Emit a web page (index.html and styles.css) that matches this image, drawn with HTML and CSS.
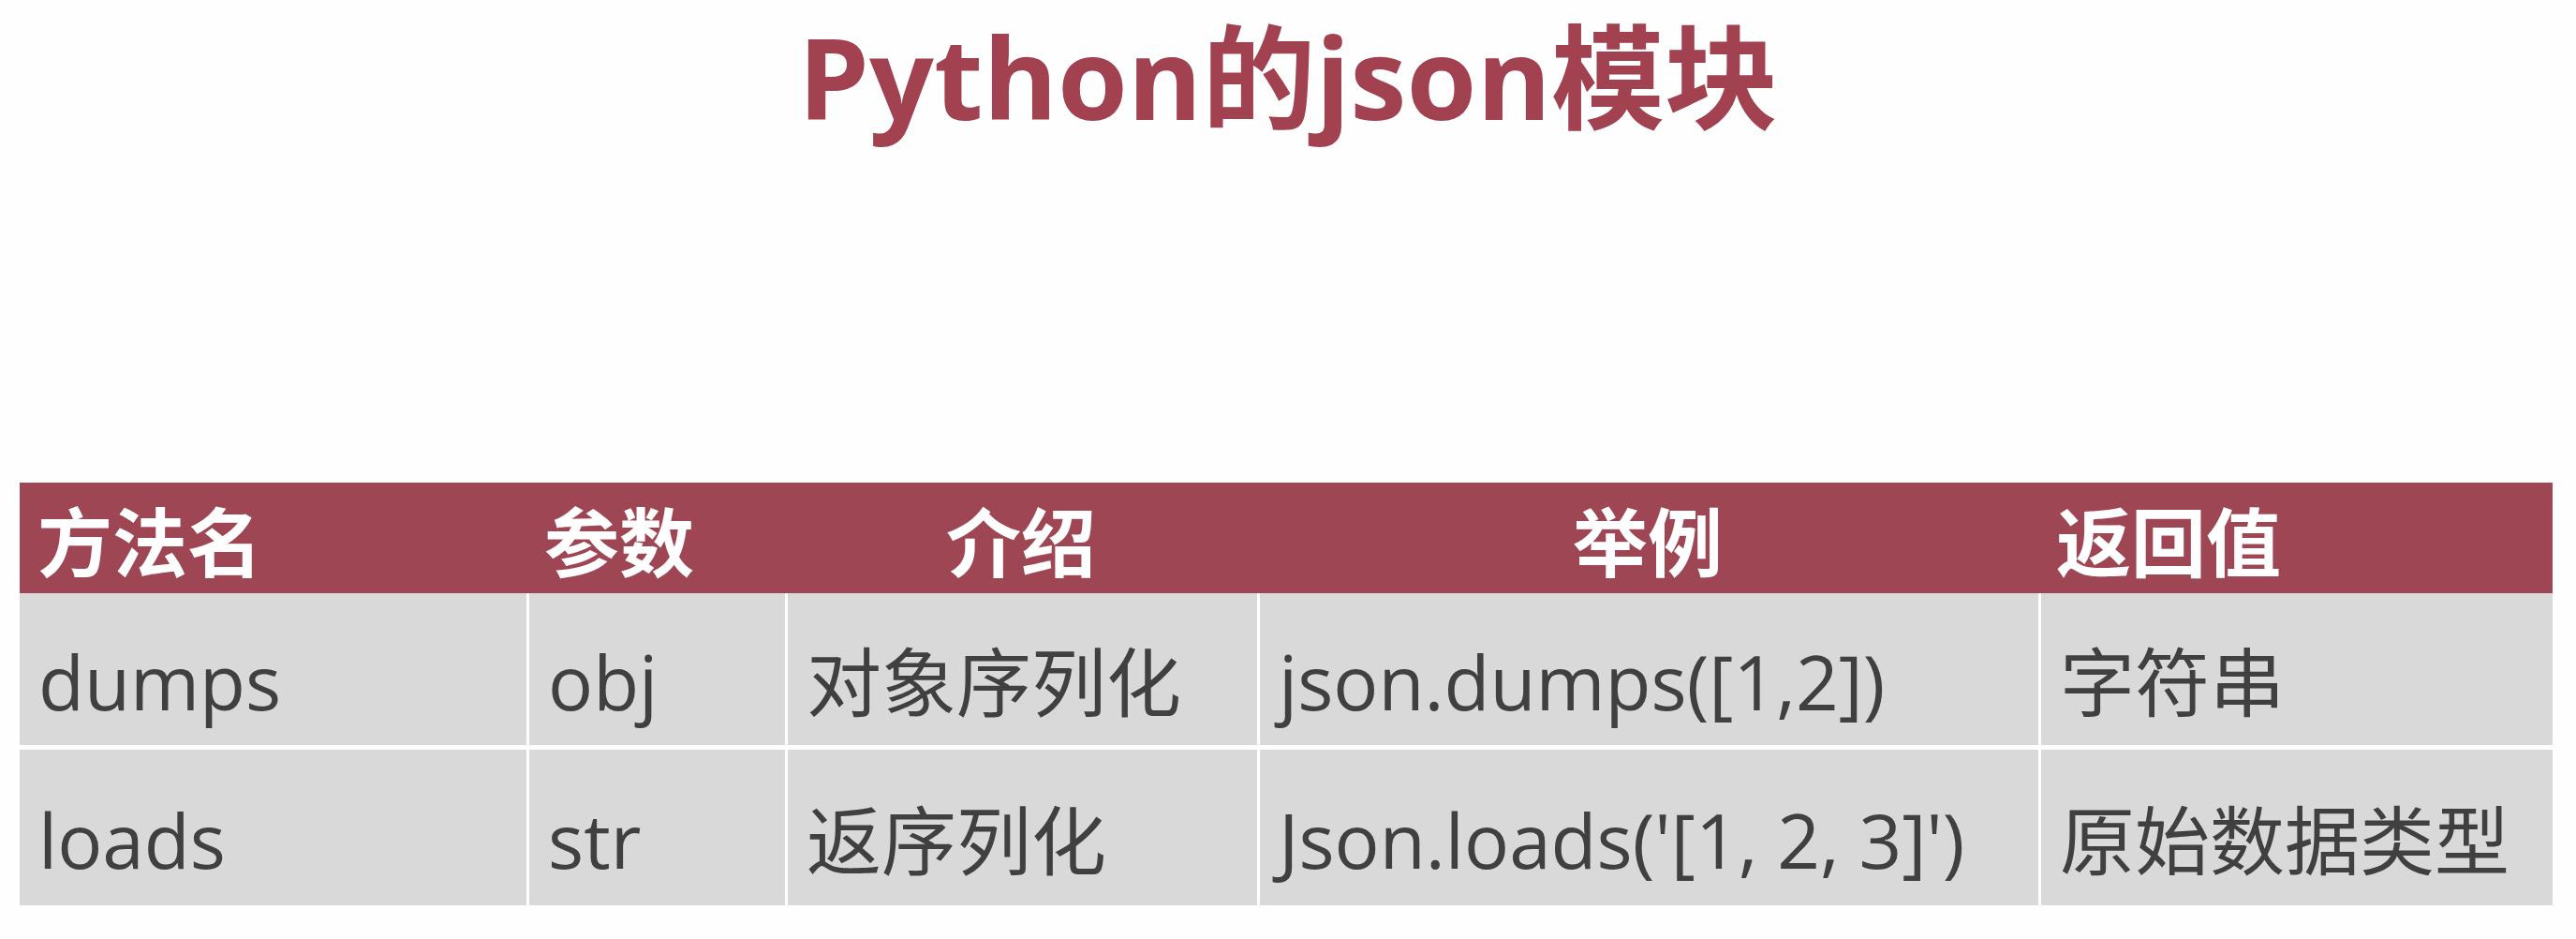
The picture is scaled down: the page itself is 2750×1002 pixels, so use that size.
FILE: index.html
```html
<!DOCTYPE html>
<html lang="zh-CN">
<head>
<meta charset="utf-8">
<title>Python的json模块</title>
<link rel="stylesheet" href="styles.css">
</head>
<body>
<main class="slide">
  <h1 class="title">Python的json模块</h1>
  <div class="table">
    <div class="row head">
      <div class="cell c1">方法名</div>
      <div class="cell c2">参数</div>
      <div class="cell c3 center">介绍</div>
      <div class="cell c4 center">举例</div>
      <div class="cell c5">返回值</div>
    </div>
    <div class="row body r1">
      <div class="cell c1">dumps</div>
      <div class="cell c2">obj</div>
      <div class="cell c3">对象序列化</div>
      <div class="cell c4">json.dumps([1,2])</div>
      <div class="cell c5">字符串</div>
    </div>
    <div class="row body r2">
      <div class="cell c1">loads</div>
      <div class="cell c2">str</div>
      <div class="cell c3">返序列化</div>
      <div class="cell c4">Json.loads('[1, 2, 3]')</div>
      <div class="cell c5">原始数据类型</div>
    </div>
  </div>
</main>
</body>
</html>
```

FILE: styles.css
```css
html, body {
  margin: 0;
  padding: 0;
  background: #fefefe;
}

body {
  width: 2750px;
  height: 1002px;
  overflow: hidden;
  font-family: "Open Sans", "Noto Sans CJK SC", sans-serif;
}

.slide {
  display: flex;
  flex-direction: column;
}

.title {
  margin: 0;
  padding-top: 6px;
  height: 515px;
  box-sizing: border-box;
  text-align: center;
  font-family: "Open Sans", "Noto Sans CJK SC", sans-serif;
  font-weight: 700;
  font-size: 121px;
  line-height: 150px;
  color: #a2414f;
  letter-spacing: 0;
}

.table {
  margin-left: 21px;
  width: 2704px;
}

.row {
  display: grid;
  grid-template-columns: 541px 276px 504px 834px 549px;
}

.cell {
  display: flex;
  align-items: center;
  box-sizing: border-box;
  font-size: 80px;
  white-space: nowrap;
}

.head {
  height: 118px;
  background: #9f4654;
}

.head .cell {
  color: #ffffff;
  font-family: "Noto Sans CJK SC", sans-serif;
  font-weight: 700;
  padding-left: 19px;
  line-height: 1;
}

.head .cell.center {
  justify-content: center;
  padding-left: 0;
}

.body .cell {
  background: #d9d9d9;
  color: #404040;
  padding-left: 20px;
  padding-top: 26px;
  line-height: 1;
}

.body .cell + .cell {
  border-left: 3px solid #fefefe;
}

.r1 {
  height: 162px;
}

.r2 {
  height: 166px;
  border-top: 5px solid #fefefe;
}
```
